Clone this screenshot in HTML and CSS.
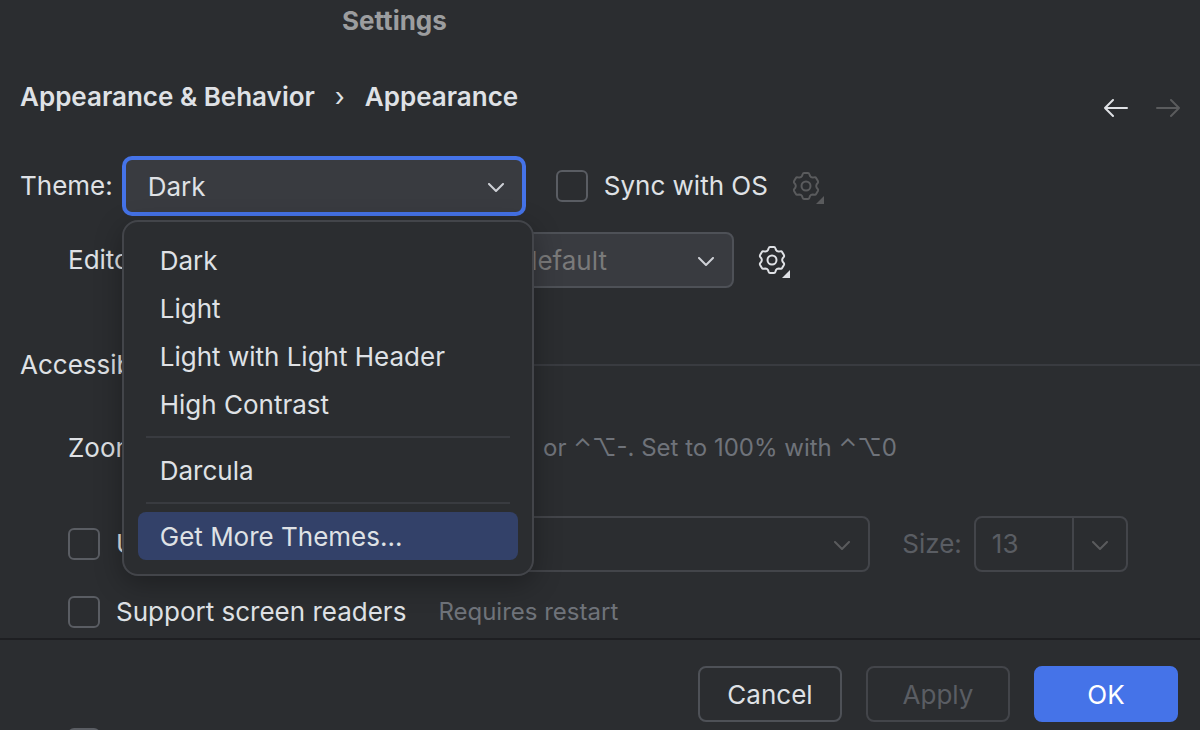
FILE: index.html
```html
<!DOCTYPE html>
<html lang="en">
<head>
    <meta charset="UTF-8">
    <meta name="viewport" content="width=device-width, initial-scale=1.0">
    <title>Settings</title>
    <link rel="stylesheet" href="styles.css">
</head>
<body>
    <svg class="symbols" aria-hidden="true">
        <symbol id="gear" viewBox="-14 -14 32 32">
            <path fill="none" stroke="currentColor" stroke-width="2" stroke-linejoin="round" d="M-2 -13H2Q3 -13 3.3 -12L4 -10Q4.9 -8.5 6.6 -8.5L8.6 -8.8Q9.6 -9 10.1 -8.1L11.9 -4.9Q12.4 -3.9 11.8 -3.1L10.6 -1.6Q9.8 0 10.6 1.6L11.8 3.1Q12.4 3.9 11.9 4.9L10.1 8.1Q9.6 9 8.6 8.8L6.6 8.5Q4.9 8.5 4 10L3.3 12Q3 13 2 13H-2Q-3 13 -3.3 12L-4 10Q-4.9 8.5 -6.6 8.5L-8.6 8.8Q-9.6 9 -10.1 8.1L-11.9 4.9Q-12.4 3.9 -11.8 3.1L-10.6 1.6Q-9.8 0 -10.6 -1.6L-11.8 -3.1Q-12.4 -3.9 -11.9 -4.9L-10.1 -8.1Q-9.6 -9 -8.6 -8.8L-6.6 -8.5Q-4.9 -8.5 -4 -10L-3.3 -12Q-3 -13 -2 -13Z"/>
            <circle r="4.5" fill="none" stroke="currentColor" stroke-width="2"/>
            <path fill="currentColor" d="M18 10V18H10Z"/>
        </symbol>
        <symbol id="chevron" viewBox="0 0 18 10">
            <path fill="none" stroke="currentColor" stroke-width="2" stroke-linecap="round" stroke-linejoin="round" d="M2 1L9 8L16 1"/>
        </symbol>
        <symbol id="arrow" viewBox="0 0 24 24">
            <path fill="none" stroke="currentColor" stroke-width="2" stroke-linecap="round" stroke-linejoin="round" d="M23 12H1M9 4L1 12L9 20"/>
        </symbol>
    </svg>

    <div class="dialog">
        <h1 class="title">Settings</h1>

        <header class="header">
            <nav class="breadcrumbs">
                <a href="#behavior">Appearance &amp; Behavior</a>
                <span class="separator">›</span>
                <a href="#appearance">Appearance</a>
            </nav>
            <div class="history">
                <button class="icon-button" aria-label="Back"><svg class="arrow"><use href="#arrow"/></svg></button>
                <button class="icon-button" aria-label="Forward" disabled><svg class="arrow forward"><use href="#arrow"/></svg></button>
            </div>
        </header>

        <main class="form">
            <div class="row theme-row">
                <label for="theme">Theme:</label>
                <div class="combo focused theme-combo">
                    <select id="theme">
                        <option>Dark</option>
                        <option>Light</option>
                        <option>Light with Light Header</option>
                        <option>High Contrast</option>
                        <option>Darcula</option>
                    </select>
                    <svg class="chevron"><use href="#chevron"/></svg>
                    <div class="menu">
                        <button class="menu-item">Dark</button>
                        <button class="menu-item">Light</button>
                        <button class="menu-item">Light with Light Header</button>
                        <button class="menu-item">High Contrast</button>
                        <hr>
                        <button class="menu-item">Darcula</button>
                        <hr>
                        <button class="menu-item selected">Get More Themes...</button>
                    </div>
                </div>
                <label class="check"><input type="checkbox">Sync with OS</label>
                <button class="icon-button" aria-label="Sync settings" disabled><svg class="gear"><use href="#gear"/></svg></button>
            </div>

            <div class="row indent scheme-row">
                <label for="scheme">Editor color scheme:</label>
                <div class="combo scheme-combo">
                    <select id="scheme">
                        <option>Dark Theme default</option>
                    </select>
                    <svg class="chevron"><use href="#chevron"/></svg>
                </div>
                <button class="icon-button" aria-label="Scheme settings"><svg class="gear"><use href="#gear"/></svg></button>
            </div>

            <h2 class="section">Accessibility</h2>

            <div class="row indent zoom-row">
                <label for="zoom">Zoom:</label>
                <div class="combo zoom-combo">
                    <select id="zoom">
                        <option>100%</option>
                    </select>
                    <svg class="chevron"><use href="#chevron"/></svg>
                </div>
                <span class="hint">Use ⌃⌥= or ⌃⌥-. Set to 100% with ⌃⌥0</span>
            </div>

            <div class="row indent font-row">
                <label class="check"><input type="checkbox">Use custom font:</label>
                <div class="combo disabled font-combo">
                    <select aria-label="Font" disabled>
                        <option>Inter</option>
                    </select>
                    <svg class="chevron"><use href="#chevron"/></svg>
                </div>
                <label class="size-label" for="size">Size:</label>
                <div class="size-box">
                    <input type="text" id="size" value="13" disabled>
                    <button aria-label="Choose size" disabled><svg class="chevron"><use href="#chevron"/></svg></button>
                </div>
            </div>

            <div class="row indent reader-row">
                <label class="check"><input type="checkbox">Support screen readers</label>
                <span class="hint">Requires restart</span>
            </div>
        </main>

        <footer class="footer">
            <button class="button">Cancel</button>
            <button class="button" disabled>Apply</button>
            <button class="button primary">OK</button>
        </footer>

        <div class="row indent check">
            <input type="checkbox" aria-label="Use contrast scrollbars">
        </div>
    </div>
</body>
</html>
```

FILE: styles.css
```css
* {
    margin: 0;
    padding: 0;
    box-sizing: border-box;
}

body {
    height: 100vh;
    overflow: hidden;
    background-color: #2b2d30;
    color: #dfe1e5;
    font-family: Inter, "Liberation Sans", sans-serif;
    font-size: 26px;
    line-height: 32px;
}

button,
input,
select {
    font: inherit;
    color: inherit;
    background: none;
    border: none;
    outline: none;
}

a {
    color: inherit;
    text-decoration: none;
}

svg {
    display: block;
}

.symbols {
    position: absolute;
    width: 0;
    height: 0;
}

.title {
    padding: 5px 0 5px 342px;
    font-size: 26px;
    font-weight: 700;
    color: #9c9d9f;
}

/* breadcrumbs and history arrows */
.header {
    display: flex;
    justify-content: space-between;
    align-items: flex-start;
    margin-top: 39px;
    padding: 0 20px;
}

.breadcrumbs {
    display: flex;
    gap: 20px;
    font-weight: 600;
}

.separator {
    font-weight: 400;
}

.history {
    display: flex;
    gap: 28px;
    margin-top: 15px;
}

.icon-button:disabled {
    color: #5a5b5d;
}

.arrow {
    width: 24px;
    height: 24px;
}

.forward {
    transform: scaleX(-1);
}

/* form */
.form {
    padding-top: 38px;
}

.row {
    display: flex;
    align-items: center;
    padding-left: 20px;
    white-space: nowrap;
}

.row > * {
    flex-shrink: 0;
}

.indent {
    padding-left: 68px;
}

.theme-row,
.scheme-row {
    gap: 11px;
    margin-bottom: 18px;
}

.theme-row .check {
    margin-left: 21px;
}

.row .icon-button {
    margin-left: 13px;
    padding-top: 4px;
}

.combo {
    position: relative;
    height: 56px;
    background-color: #393b40;
    border: 2px solid #4e5157;
    border-radius: 8px;
}

.combo select {
    appearance: none;
    width: 100%;
    height: 100%;
    padding: 2px 48px 0 22px;
}

.combo > .chevron {
    position: absolute;
    top: 23px;
    right: 17px;
    pointer-events: none;
}

.chevron {
    width: 18px;
    height: 10px;
    color: #ced0d6;
}

.combo.focused {
    border-color: #4573e8;
    box-shadow: 0 0 0 2px #4573e8;
}

.combo.disabled {
    background: none;
    border-color: #43454a;
}

.disabled .chevron,
.size-box .chevron {
    color: #5a5b5d;
}

.theme-combo {
    width: 400px;
}

.scheme-combo {
    width: 394px;
    margin-left: 8px;
    color: #7a7a7a;
}

.zoom-combo {
    width: 248px;
}

.font-combo {
    width: 533px;
}

.gear {
    width: 32px;
    height: 32px;
}

.check {
    display: flex;
    align-items: center;
    gap: 16px;
}

.check input {
    appearance: none;
    width: 32px;
    height: 32px;
    border: 2px solid #5a5d63;
    border-radius: 6px;
}

.section {
    display: flex;
    align-items: center;
    gap: 16px;
    margin-top: 61px;
    padding-left: 20px;
    font-size: 26px;
    font-weight: 400;
}

.section::after {
    content: "";
    flex: 1;
    height: 2px;
    background-color: #393b40;
}

.zoom-row {
    gap: 16px;
    margin-top: 39px;
}

.hint {
    font-size: 24px;
    color: #6f737a;
}

.font-row {
    gap: 12px;
    margin-top: 40px;
}

.size-label {
    margin-left: 20px;
    color: #5a5d63;
}

.size-box {
    display: flex;
    width: 154px;
    height: 56px;
    border: 2px solid #43454a;
    border-radius: 8px;
}

.size-box input {
    flex: 1;
    min-width: 0;
    padding-left: 16px;
    color: #5a5d63;
}

.size-box button {
    display: flex;
    justify-content: center;
    align-items: center;
    width: 54px;
    padding-top: 4px;
    border-left: 2px solid #43454a;
}

.reader-row {
    gap: 32px;
    margin-top: 24px;
}

/* theme popup */
.menu {
    position: absolute;
    top: 60px;
    left: -4px;
    z-index: 1;
    width: 412px;
    padding: 14px;
    background-color: #2b2d30;
    border: 2px solid #43454a;
    border-radius: 16px;
    box-shadow: 0 8px 28px rgba(0, 0, 0, 0.3);
}

.menu-item {
    display: block;
    width: 100%;
    height: 48px;
    padding: 2px 22px 0;
    border-radius: 8px;
    text-align: left;
}

.menu-item.selected {
    background-color: #334169;
}

.menu hr {
    height: 2px;
    margin: 8px;
    border: none;
    background-color: #393b40;
}

/* footer */
.footer {
    display: flex;
    justify-content: flex-end;
    gap: 24px;
    margin-top: 10px;
    padding: 26px 22px 6px;
    border-top: 2px solid #1e1f22;
}

.button {
    width: 144px;
    height: 56px;
    padding-top: 2px;
    border: 2px solid #4e5157;
    border-radius: 8px;
}

.button:disabled {
    border-color: #43454a;
    color: #5a5d63;
}

.button.primary {
    border-color: #4573e8;
    background-color: #4573e8;
    color: #ffffff;
}
```
